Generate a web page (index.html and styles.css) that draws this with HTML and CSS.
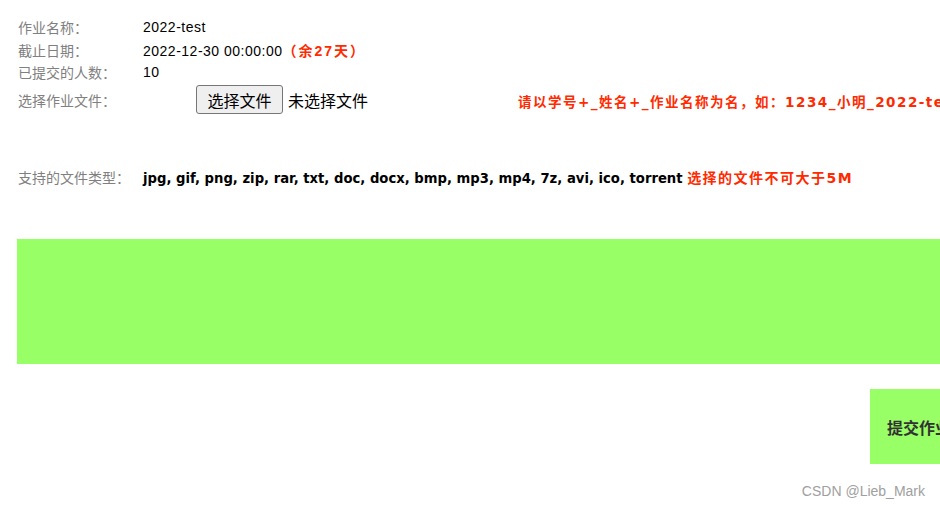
FILE: index.html
```html
<!DOCTYPE html>
<html lang="zh-CN">
<head>
<meta charset="utf-8">
<title>作业提交</title>
<link rel="stylesheet" href="styles.css">
</head>
<body>
<div class="page">
  <div class="info">
    <div class="row"><span class="label">作业名称：</span><span class="value">2022-test</span></div>
    <div class="row"><span class="label">截止日期：</span><span class="value">2022-12-30 00:00:00<span class="red remain">（余27天）</span></span></div>
    <div class="row"><span class="label">已提交的人数：</span><span class="value">10</span></div>
    <div class="row file-row">
      <span class="label">选择作业文件：</span>
      <span class="file">
        <span class="file-btn">选择文件</span><span class="file-none">未选择文件</span>
      </span>
      <span class="hint">请以学号+_姓名+_作业名称为名，如：1234_小明_2022-test</span>
    </div>
    <div class="row types-row"><span class="label">支持的文件类型：</span><span class="value types">jpg, gif, png, zip, rar, txt, doc, docx, bmp, mp3, mp4, 7z, avi, ico, torrent <span class="red limit">选择的文件不可大于5M</span></span></div>
  </div>
  <div class="drop"></div>
  <div class="actions"><span class="submit">提交作业</span></div>
</div>
<div class="watermark">CSDN @Lieb_Mark</div>
</body>
</html>
```
FILE: styles.css
```css
html, body {
  margin: 0;
  padding: 0;
  overflow: hidden;
  background: #fff;
}
body {
  position: relative;
  width: 940px;
  height: 507px;
  font-family: "Liberation Sans", "Noto Sans CJK SC", sans-serif;
  font-size: 14px;
  color: #000;
}
.page {
  padding: 16px 0 0 17px;
  width: 1100px;
}
.info {
  display: flex;
  flex-direction: column;
}
.row {
  display: flex;
  align-items: center;
  height: 22.5px;
  white-space: nowrap;
}
.label {
  width: 125px;
  padding-left: 1px;
  color: #808080;
  flex: none;
}
.value {
  color: #000;
  letter-spacing: 0.5px;
}
.red {
  color: #ff2a00;
  font-weight: bold;
}
.remain {
  letter-spacing: 2px;
}
.file-row {
  height: 30px;
  margin-top: 1px;
}
.file {
  display: flex;
  align-items: center;
  margin-left: 53px;
  width: 322px;
  flex: none;
}
.file-btn {
  box-sizing: border-box;
  height: 29px;
  width: 87px;
  display: flex;
  align-items: center;
  justify-content: center;
  border: 1px solid #767676;
  border-radius: 3px;
  background: #efefef;
  font-size: 16px;
  font-family: "Noto Sans CJK SC", sans-serif;
}
.file-none {
  margin-left: 5px;
  font-size: 16px;
  font-family: "Noto Sans CJK SC", sans-serif;
}
.hint {
  color: #ff2a00;
  font-weight: bold;
  padding-top: 2px;
  font-family: "DejaVu Sans", "Noto Sans CJK SC", sans-serif;
  font-size: 13.5px;
  letter-spacing: 1.5px;
}
.types-row {
  margin-top: 51px;
}
.types {
  font-weight: bold;
  font-family: "DejaVu Sans", "Noto Sans CJK SC", sans-serif;
  font-size: 13.2px;
  letter-spacing: 0;
}
.limit {
  font-size: 14px;
  letter-spacing: 1.5px;
}
.drop {
  margin-top: 51px;
  height: 125px;
  background: #99ff66;
}
.actions {
  display: flex;
  margin-top: 25px;
  padding-left: 853px;
}
.submit {
  display: flex;
  align-items: center;
  height: 75px;
  width: 120px;
  padding-left: 17px;
  background: #99ff66;
  color: #333;
  font-size: 16px;
  font-weight: bold;
  font-family: "Noto Sans CJK SC", sans-serif;
}
.watermark {
  position: absolute;
  right: 15px;
  bottom: 8px;
  color: #a0a0a0;
  font-size: 14px;
  font-family: "Liberation Sans", sans-serif;
}
```
